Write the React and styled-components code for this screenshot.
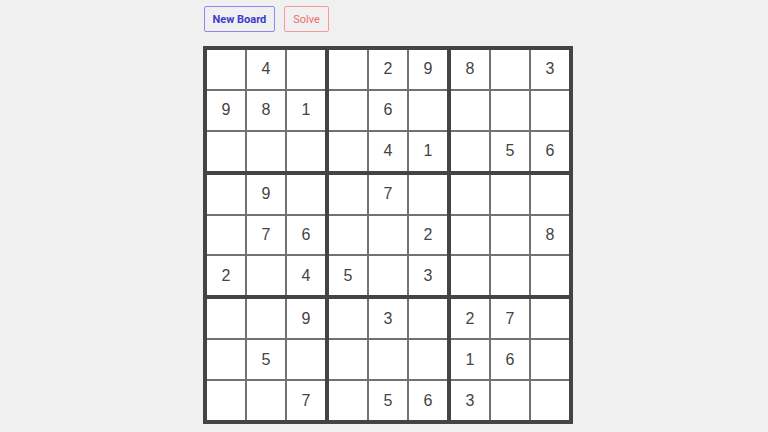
import React from "react";
import styled, { createGlobalStyle } from "styled-components";

const GlobalStyle = createGlobalStyle`
  body {
    margin: 0;
    background: #f0f0f0;
    font-family: "Liberation Sans", Arial, sans-serif;
  }
`;

const Page = styled.div`
  display: flex;
  flex-direction: column;
  align-items: flex-start;
  padding: 6px 0 0 203px;
`;

const Toolbar = styled.div`
  display: flex;
  gap: 9px;
  margin-left: 1px;
  margin-bottom: 14px;
`;

const Button = styled.button`
  height: 26px;
  padding: 0 ${(p) => (p.$bold ? 7.5 : 8.5)}px;
  border: 1px solid ${(p) => p.$border};
  border-radius: 2px;
  background: transparent;
  color: ${(p) => p.$color};
  font-family: Roboto, "Liberation Sans", sans-serif;
  font-size: 11px;
  font-weight: ${(p) => (p.$bold ? 700 : 400)};
  cursor: pointer;
`;

const Board = styled.div`
  display: grid;
  grid-template-columns: repeat(3, auto);
  gap: 4px;
  padding: 4px;
  background: #444;
`;

const Box = styled.div`
  display: grid;
  grid-template-columns: repeat(3, 38px);
  grid-auto-rows: 38.9px;
  gap: 2px;
  background: #727272;
`;

const Cell = styled.div`
  display: flex;
  align-items: center;
  justify-content: center;
  background: #fff;
  color: #444;
  font-size: 16px;
`;

const puzzle = [
  " 4  298 3",
  "981 6    ",
  "    41 56",
  " 9  7    ",
  " 76  2  8",
  "2 45 3   ",
  "  9 3 27 ",
  " 5    16 ",
  "  7 563  ",
];

function boxCells(b) {
  const br = Math.floor(b / 3) * 3;
  const bc = (b % 3) * 3;
  const out = [];
  for (let r = 0; r < 3; r++) {
    for (let c = 0; c < 3; c++) {
      out.push(puzzle[br + r][bc + c].trim());
    }
  }
  return out;
}

export default function App() {
  return (
    <>
      <GlobalStyle />
      <Page>
        <Toolbar>
          <Button $border="#8a8af2" $color="#3c3ccf" $bold>
            New Board
          </Button>
          <Button $border="#f39a9a" $color="#f06a6a">
            Solve
          </Button>
        </Toolbar>
        <Board>
          {Array.from({ length: 9 }, (_, b) => (
            <Box key={b}>
              {boxCells(b).map((v, i) => (
                <Cell key={i}>{v}</Cell>
              ))}
            </Box>
          ))}
        </Board>
      </Page>
    </>
  );
}
